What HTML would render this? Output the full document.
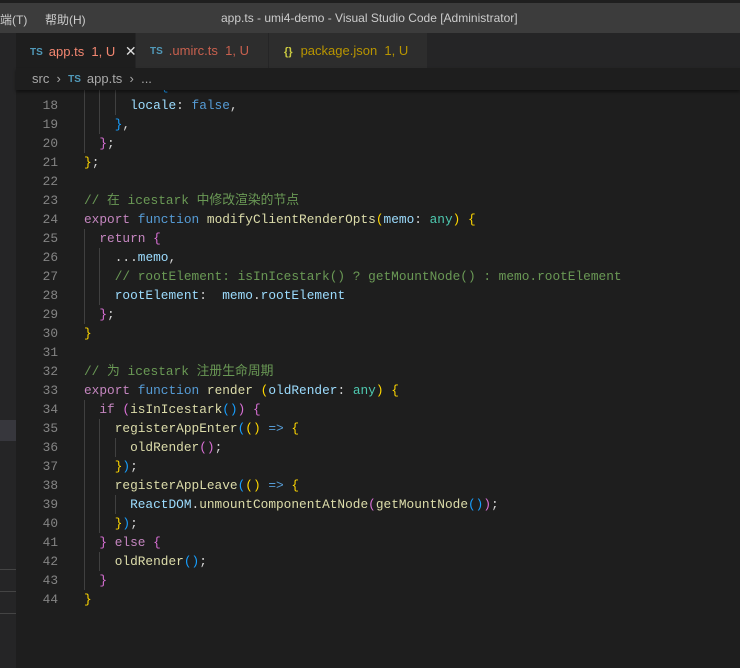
<!DOCTYPE html>
<html><head><meta charset="utf-8"><style>
*{margin:0;padding:0;box-sizing:border-box}
body{width:740px;height:668px;background:#1e1e1e;overflow:hidden;position:relative;font-family:"Liberation Sans","Noto Sans CJK SC",sans-serif}
.abs{position:absolute}
#top{left:0;top:0;width:740px;height:3px;background:#1f1f1f}
#title{left:0;top:3px;width:740px;height:30px;background:#3c3c3c;color:#cccccc;font-size:12px}
#title span{position:absolute;top:8px;white-space:nowrap}
#tabs{left:0;top:33px;width:740px;height:35px;background:#252526}
.tab{position:absolute;top:0;height:35px;font-size:13px;white-space:nowrap;padding-top:10px}
.ts{color:#519aba;font-weight:bold;font-size:10px;margin-right:6px;vertical-align:1px}
#side{left:0;top:68px;width:16px;height:600px;background:#252526}
#crumb{left:16px;top:68px;width:724px;height:22px;background:#1e1e1e;color:#a9a9a9;font-size:13px;box-shadow:0 2px 3px rgba(0,0,0,.45);z-index:2}
#code{left:16px;top:90px;width:724px;height:578px;overflow:hidden}
.ln{position:absolute;left:0;width:42px;text-align:right;color:#858585}
.l{position:absolute;left:68px;white-space:pre;color:#d4d4d4}
.ln,.l{font-family:"Liberation Mono","Noto Sans CJK SC",monospace;font-size:12.8px;line-height:19px;height:19px}
.g{position:absolute;width:1px;background:#404040}
.k{color:#c586c0}.b{color:#569cd6}.f{color:#dcdcaa}.v{color:#9cdcfe}.t{color:#4ec9b0}.c{color:#6a9955}
.y{color:#ffd700}.p{color:#da70d6}.u{color:#179fff}
</style></head><body>
<div class="abs" id="top"></div>
<div class="abs" id="title"><span style="left:0">端(T)</span><span style="left:45px">帮助(H)</span><span style="left:221px">app.ts - umi4-demo - Visual Studio Code [Administrator]</span></div>
<div class="abs" id="tabs">
 <div class="tab" style="left:16px;width:119px;background:#1e1e1e;padding-left:14px;color:#f48771"><span class="ts">TS</span>app.ts&nbsp; 1, U <span style="color:#ddd;margin-left:6px;font-size:14px">✕</span></div>
 <div class="tab" style="left:136px;width:132px;background:#2d2d2d;padding-left:14px;color:#c8604e"><span class="ts">TS</span>.umirc.ts&nbsp; 1, U</div>
 <div class="tab" style="left:269px;width:158px;background:#2d2d2d;padding-left:15px;color:#b89500"><span style="color:#cbcb41;font-weight:bold;font-size:11px;margin-right:8px">{}</span>package.json&nbsp; 1, U</div>
</div>
<div class="abs" id="side"><div class="abs" style="left:0;top:352px;width:16px;height:21px;background:#37373d"></div><div class="abs" style="left:0;top:501px;width:16px;height:1px;background:#444"></div><div class="abs" style="left:0;top:523px;width:16px;height:1px;background:#444"></div><div class="abs" style="left:0;top:545px;width:16px;height:1px;background:#444"></div></div>
<div class="abs" id="crumb"><span style="position:absolute;left:16px;top:3px;white-space:nowrap">src &nbsp;›&nbsp; <span class="ts">TS</span>app.ts &nbsp;›&nbsp; ...</span></div>
<div class="abs" id="code">
<div class="g" style="left:68px;top:0;height:63px"></div>
<div class="g" style="left:83px;top:0;height:44px"></div>
<div class="g" style="left:99px;top:0;height:25px"></div>
<div class="g" style="left:68px;top:139px;height:95px"></div>
<div class="g" style="left:83px;top:158px;height:57px"></div>
<div class="g" style="left:68px;top:310px;height:190px"></div>
<div class="g" style="left:83px;top:329px;height:114px"></div>
<div class="g" style="left:99px;top:348px;height:19px"></div>
<div class="g" style="left:99px;top:405px;height:19px"></div>
<div class="g" style="left:83px;top:462px;height:19px"></div>
<div class="ln" style="top:-13px">17</div><div class="l" style="top:-13px">    <span class="v">menu</span>: <span class="u">{</span></div>
<div class="ln" style="top:6px">18</div><div class="l" style="top:6px">      <span class="v">locale</span>: <span class="b">false</span>,</div>
<div class="ln" style="top:25px">19</div><div class="l" style="top:25px">    <span class="u">}</span>,</div>
<div class="ln" style="top:44px">20</div><div class="l" style="top:44px">  <span class="p">}</span>;</div>
<div class="ln" style="top:63px">21</div><div class="l" style="top:63px"><span class="y">}</span>;</div>
<div class="ln" style="top:82px">22</div>
<div class="ln" style="top:101px">23</div><div class="l c" style="top:101px">// 在 icestark 中修改渲染的节点</div>
<div class="ln" style="top:120px">24</div><div class="l" style="top:120px"><span class="k">export</span> <span class="b">function</span> <span class="f">modifyClientRenderOpts</span><span class="y">(</span><span class="v">memo</span>: <span class="t">any</span><span class="y">)</span> <span class="y">{</span></div>
<div class="ln" style="top:139px">25</div><div class="l" style="top:139px">  <span class="k">return</span> <span class="p">{</span></div>
<div class="ln" style="top:158px">26</div><div class="l" style="top:158px">    ...<span class="v">memo</span>,</div>
<div class="ln" style="top:177px">27</div><div class="l c" style="top:177px">    // rootElement: isInIcestark() ? getMountNode() : memo.rootElement</div>
<div class="ln" style="top:196px">28</div><div class="l" style="top:196px">    <span class="v">rootElement</span>:  <span class="v">memo</span>.<span class="v">rootElement</span></div>
<div class="ln" style="top:215px">29</div><div class="l" style="top:215px">  <span class="p">}</span>;</div>
<div class="ln" style="top:234px">30</div><div class="l" style="top:234px"><span class="y">}</span></div>
<div class="ln" style="top:253px">31</div>
<div class="ln" style="top:272px">32</div><div class="l c" style="top:272px">// 为 icestark 注册生命周期</div>
<div class="ln" style="top:291px">33</div><div class="l" style="top:291px"><span class="k">export</span> <span class="b">function</span> <span class="f">render</span> <span class="y">(</span><span class="v">oldRender</span>: <span class="t">any</span><span class="y">)</span> <span class="y">{</span></div>
<div class="ln" style="top:310px">34</div><div class="l" style="top:310px">  <span class="k">if</span> <span class="p">(</span><span class="f">isInIcestark</span><span class="u">()</span><span class="p">)</span> <span class="p">{</span></div>
<div class="ln" style="top:329px">35</div><div class="l" style="top:329px">    <span class="f">registerAppEnter</span><span class="u">(</span><span class="y">()</span> <span class="b">=&gt;</span> <span class="y">{</span></div>
<div class="ln" style="top:348px">36</div><div class="l" style="top:348px">      <span class="f">oldRender</span><span class="p">()</span>;</div>
<div class="ln" style="top:367px">37</div><div class="l" style="top:367px">    <span class="y">}</span><span class="u">)</span>;</div>
<div class="ln" style="top:386px">38</div><div class="l" style="top:386px">    <span class="f">registerAppLeave</span><span class="u">(</span><span class="y">()</span> <span class="b">=&gt;</span> <span class="y">{</span></div>
<div class="ln" style="top:405px">39</div><div class="l" style="top:405px">      <span class="v">ReactDOM</span>.<span class="f">unmountComponentAtNode</span><span class="p">(</span><span class="f">getMountNode</span><span class="u">()</span><span class="p">)</span>;</div>
<div class="ln" style="top:424px">40</div><div class="l" style="top:424px">    <span class="y">}</span><span class="u">)</span>;</div>
<div class="ln" style="top:443px">41</div><div class="l" style="top:443px">  <span class="p">}</span> <span class="k">else</span> <span class="p">{</span></div>
<div class="ln" style="top:462px">42</div><div class="l" style="top:462px">    <span class="f">oldRender</span><span class="u">()</span>;</div>
<div class="ln" style="top:481px">43</div><div class="l" style="top:481px">  <span class="p">}</span></div>
<div class="ln" style="top:500px">44</div><div class="l" style="top:500px"><span class="y">}</span></div>
</div>
</body></html>
